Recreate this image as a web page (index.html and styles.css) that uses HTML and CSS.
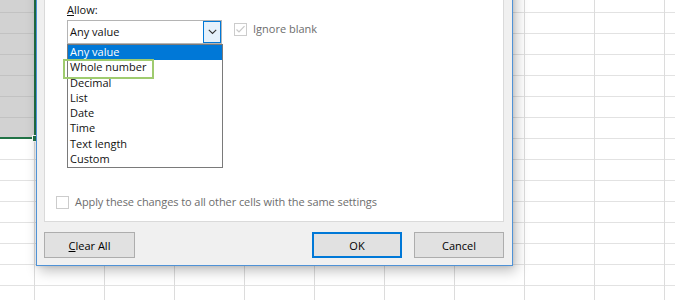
FILE: index.html
```html
<!DOCTYPE html>
<html>
<head>
<meta charset="utf-8">
<link rel="stylesheet" href="styles.css">
</head>
<body>
<div class="sheet">
  <div class="selection"><span class="handle"></span></div>

  <div class="dialog">
    <div class="panel">
      <div class="top-row">
        <div class="allow">
          <div class="label"><u>A</u>llow:</div>
          <div class="combo">
            <span class="combo-value">Any value</span>
            <span class="combo-btn">
              <svg width="9" height="6" viewBox="0 0 9 6"><polyline points="0.8,0.8 4.5,4.5 8.2,0.8" fill="none" stroke="#333" stroke-width="1.1"/></svg>
            </span>
            <ul class="list">
              <li class="sel">Any value</li>
              <li>Whole number</li>
              <li>Decimal</li>
              <li>List</li>
              <li>Date</li>
              <li>Time</li>
              <li>Text length</li>
              <li>Custom</li>
            </ul>
            <span class="mark"></span>
          </div>
        </div>
        <label class="check disabled ignore">
          <span class="box">
            <svg width="13" height="13" viewBox="0 0 13 13"><polyline points="2.5,6.5 5,9 10.5,3.2" fill="none" stroke="#c8c8c8" stroke-width="1.2"/></svg>
          </span>
          <span>Ignore blank</span>
        </label>
      </div>
      <label class="check disabled apply">
        <span class="box"></span>
        <span>Apply these changes to all other cells with the same settings</span>
      </label>
    </div>
    <div class="buttons">
      <button class="btn clear"><u>C</u>lear All</button>
      <span class="spacer"></span>
      <button class="btn ok">OK</button>
      <button class="btn cancel">Cancel</button>
    </div>
  </div>
</div>
</body>
</html>
```
FILE: styles.css
```css
html, body {
  margin: 0;
  padding: 0;
}
body {
  width: 675px;
  height: 300px;
  overflow: hidden;
  font-family: "Open Sans", "Noto Sans", sans-serif;
  font-size: 11px;
  color: #111;
}
.sheet {
  position: relative;
  width: 675px;
  height: 300px;
  background-color: #fff;
  background-image:
    linear-gradient(to right, transparent 69px, #dcdcdc 69px),
    linear-gradient(to bottom, transparent 20px, #e2e2e2 20px);
  background-size: 70px 100%, 100% 21px;
  background-position: 35px 0, 0 13px;
}
.selection {
  position: absolute;
  left: 0;
  top: 0;
  width: 34px;
  height: 137px;
  background-color: #d2d2d2;
  background-image: linear-gradient(to bottom, transparent 20px, #c2c2c2 20px);
  background-size: 100% 21px;
  background-position: 0 13px;
  border-right: 2px solid #217346;
  border-bottom: 2px solid #217346;
}
.handle {
  position: absolute;
  right: -5px;
  bottom: -5px;
  width: 5px;
  height: 5px;
  background: #217346;
  border: 1px solid #fff;
}
.dialog {
  position: absolute;
  left: 36px;
  top: -30px;
  width: 477px;
  height: 296px;
  box-sizing: border-box;
  background: #f0f0f0;
  border: 1px solid #4f92d6;
  box-shadow: 3px 5px 12px rgba(0, 0, 0, 0.25), 0 0 4px rgba(0, 0, 0, 0.12);
  padding: 0 8px 0 7px;
  display: flex;
  flex-direction: column;
}
.panel {
  background: #fff;
  border: 1px solid #dadada;
  border-top: none;
  padding: 31px 0 0 22px;
  height: 251px;
  box-sizing: border-box;
  display: flex;
  flex-direction: column;
}
.top-row {
  display: flex;
  align-items: flex-start;
  gap: 12px;
}
.label {
  line-height: 16px;
  height: 18px;
}
.label u {
  text-underline-offset: 1px;
}
.combo {
  position: relative;
  width: 155px;
  height: 24px;
  box-sizing: border-box;
  border: 1px solid #b4b4b4;
  background: #fff;
  display: flex;
  align-items: center;
}
.combo-value {
  flex: 1;
  padding-left: 2px;
  line-height: 22px;
}
.combo-btn {
  width: 18px;
  height: 22px;
  box-sizing: border-box;
  border: 1px solid #0078d7;
  background: #e5f1fb;
  display: flex;
  align-items: center;
  justify-content: center;
}
.list {
  position: absolute;
  left: -1px;
  top: 23px;
  width: 156px;
  margin: 0;
  padding: 0;
  list-style: none;
  background: #fff;
  border: 1px solid #7a7a7a;
  box-sizing: border-box;
}
.list li {
  height: 15.3px;
  line-height: 14.6px;
  padding-left: 2px;
}
.list li.sel {
  background: #0078d7;
  color: #fff;
}
.mark {
  position: absolute;
  left: -5px;
  top: 38px;
  width: 87px;
  height: 16px;
  border: 2px solid #9fcb6f;
}
.check {
  display: flex;
  align-items: center;
  gap: 6px;
  line-height: 16px;
}
.check.disabled {
  color: #6d6d6d;
}
.box {
  width: 13px;
  height: 13px;
  box-sizing: border-box;
  border: 1px solid #cccccc;
  background: #fff;
  display: flex;
}
.box svg {
  margin: -1px;
}
.ignore {
  margin-top: 19px;
}
.apply {
  margin-top: 150px;
  margin-left: -11px;
  letter-spacing: -0.08px;
}
.buttons {
  display: flex;
  margin-top: 10px;
  gap: 12px;
}
.spacer {
  flex: 1;
}
.btn {
  font: inherit;
  color: #000;
  height: 26px;
  background: #e1e1e1;
  border: 1px solid #adadad;
  padding: 0;
  margin: 0;
}
.btn.clear {
  width: 91px;
}
.btn.ok {
  width: 90px;
  border: 2px solid #0078d7;
}
.btn.cancel {
  width: 90px;
}
```
